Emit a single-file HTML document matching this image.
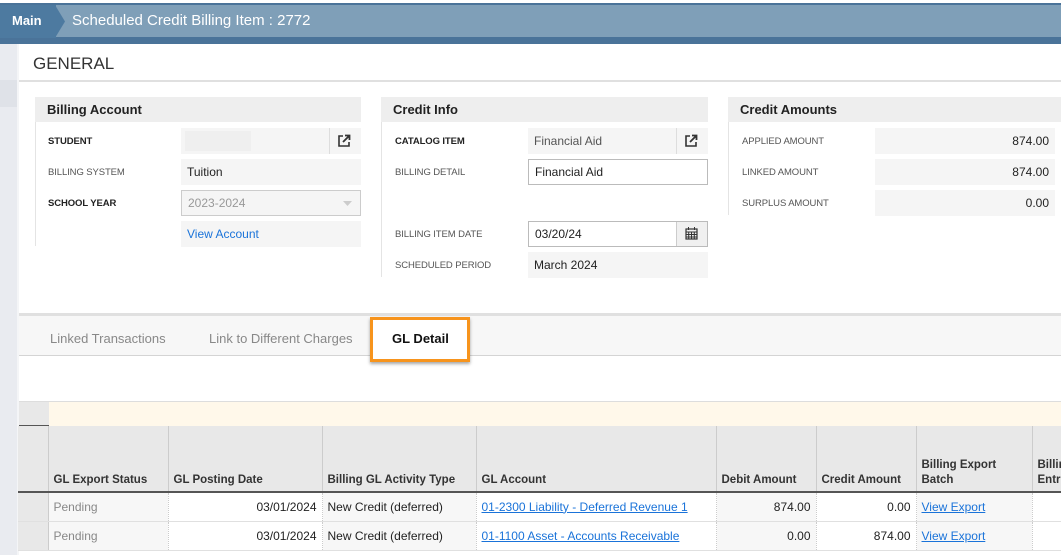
<!DOCTYPE html>
<html><head><meta charset="utf-8"><style>
*{box-sizing:border-box;margin:0;padding:0}
body{width:1061px;height:555px;overflow:hidden;background:#fff;font-family:"Liberation Sans",sans-serif;position:relative;color:#222}
.a{position:absolute}
.lbl{position:absolute;font-size:9.5px;color:#555;letter-spacing:-0.1px}
.lbl.b{font-weight:bold;color:#222}
.val{position:absolute;background:#f5f5f5;font-size:12px;padding-left:6px;line-height:26px;height:26px}
.sec{position:absolute;background:#eee;height:25px;font-size:13px;font-weight:bold;padding-left:12px;line-height:25px}
.vl{position:absolute;width:1px;background:#e4e4e4}
table{position:absolute;left:18px;top:426px;border-collapse:collapse;font-size:12px;table-layout:fixed;width:1060px}
td{height:29px;border-bottom:1px solid #e0e0e0;border-right:1px dotted #ccc;padding:0 5px;white-space:nowrap;overflow:hidden}
th{height:66px;background:#e8e8e8;border-right:1px solid #ccc;border-bottom:2px solid #555;text-align:left;vertical-align:bottom;padding:0 5px 3px;font-size:11.5px;font-weight:bold;color:#333;line-height:15px;overflow:hidden;white-space:nowrap}
a{color:#1a73d9;text-decoration:underline}
.r{text-align:right}
</style></head><body>
<div class="a" style="left:0;top:3px;width:1061px;height:2px;background:#4a7399"></div>
<div class="a" style="left:0;top:5px;width:1061px;height:33px;background:#7f9fb8"></div>
<div class="a" style="left:0;top:37px;width:1061px;height:7px;background:#4a7399"></div>
<div class="a" style="left:0;top:5px;width:56px;height:33px;background:#4d7aa0"></div>
<svg class="a" style="left:55px;top:5px" width="12" height="33"><polygon points="0,0 10,16.5 0,33" fill="#4d7aa0"/></svg>
<div class="a" style="left:12px;top:13px;color:#fff;font-weight:bold;font-size:13px">Main</div>
<div class="a" style="left:72px;top:12px;color:#fff;font-size:15px">Scheduled Credit Billing Item : 2772</div>
<div class="a" style="left:0;top:44px;width:17px;height:511px;background:#e9ebf0"></div>
<div class="a" style="left:0;top:80px;width:17px;height:27px;background:#dfe2e8"></div>
<div class="a" style="left:17px;top:44px;width:2px;height:511px;background:#f4f5f7"></div>
<div class="a" style="left:33px;top:54px;font-size:17px;color:#333">GENERAL</div>
<div class="a" style="left:19px;top:80px;width:1042px;height:2px;background:#e0e0e0"></div>
<div class="sec" style="left:35px;top:97px;width:326px">Billing Account</div>
<div class="vl" style="left:35px;top:122px;height:124px"></div>
<div class="lbl b" style="left:48px;top:136px">STUDENT</div>
<div class="val" style="left:181px;top:128px;width:180px;padding:0"><div class="a" style="left:4px;top:3px;width:66px;height:20px;background:#efefef"></div><div class="a" style="left:148px;top:0;width:1px;height:26px;background:#ddd"></div></div>
<svg class="a" style="left:337px;top:134px" width="14" height="14" viewBox="0 0 14 14"><path d="M6 2H2v10h10V8" fill="none" stroke="#333" stroke-width="1.6"/><path d="M6 8L12 2M8 1.5h4.5V6" fill="none" stroke="#333" stroke-width="1.8"/></svg>
<div class="lbl" style="left:48px;top:167px">BILLING SYSTEM</div>
<div class="val" style="left:181px;top:159px;width:180px">Tuition</div>
<div class="lbl b" style="left:48px;top:198px">SCHOOL YEAR</div>
<div class="val" style="left:181px;top:190px;width:180px;border:1px solid #ccc;color:#999;line-height:24px">2023-2024</div>
<svg class="a" style="left:343px;top:201px" width="9" height="5"><polygon points="0,0 9,0 4.5,5" fill="#ccc"/></svg>
<div class="val" style="left:181px;top:221px;width:180px;color:#1a73d9">View Account</div>
<div class="sec" style="left:381px;top:97px;width:327px">Credit Info</div>
<div class="vl" style="left:381px;top:122px;height:155px"></div>
<div class="lbl b" style="left:395px;top:136px">CATALOG ITEM</div>
<div class="val" style="left:528px;top:128px;width:180px;color:#555">Financial Aid</div>
<div class="a" style="left:676px;top:128px;width:1px;height:26px;background:#ddd"></div>
<svg class="a" style="left:684px;top:134px" width="14" height="14" viewBox="0 0 14 14"><path d="M6 2H2v10h10V8" fill="none" stroke="#333" stroke-width="1.6"/><path d="M6 8L12 2M8 1.5h4.5V6" fill="none" stroke="#333" stroke-width="1.8"/></svg>
<div class="lbl" style="left:395px;top:167px">BILLING DETAIL</div>
<div class="val" style="left:528px;top:159px;width:180px;background:#fff;border:1px solid #bbb;line-height:24px">Financial Aid</div>
<div class="lbl" style="left:395px;top:229px">BILLING ITEM DATE</div>
<div class="val" style="left:528px;top:221px;width:180px;background:#fff;border:1px solid #bbb;line-height:24px">03/20/24</div>
<div class="a" style="left:676px;top:222px;width:31px;height:24px;background:#f0f0f0;border-left:1px solid #ccc"></div>
<svg class="a" style="left:685px;top:227px" width="13" height="13" viewBox="0 0 13 13"><rect x="1" y="2" width="11" height="10" fill="none" stroke="#333" stroke-width="1.2"/><path d="M1 5h11M1 7.5h11M1 10h11M3.7 5v7M6.5 5v7M9.3 5v7M3.5 0v3M9.5 0v3" stroke="#333" stroke-width="1"/></svg>
<div class="lbl" style="left:395px;top:260px">SCHEDULED PERIOD</div>
<div class="val" style="left:528px;top:252px;width:180px">March 2024</div>
<div class="sec" style="left:728px;top:97px;width:333px">Credit Amounts</div>
<div class="vl" style="left:728px;top:122px;height:93px"></div>
<div class="lbl" style="left:742px;top:136px">APPLIED AMOUNT</div>
<div class="val r" style="left:875px;top:128px;width:180px;padding-right:6px">874.00</div>
<div class="lbl" style="left:742px;top:167px">LINKED AMOUNT</div>
<div class="val r" style="left:875px;top:159px;width:180px;padding-right:6px">874.00</div>
<div class="lbl" style="left:742px;top:198px">SURPLUS AMOUNT</div>
<div class="val r" style="left:875px;top:190px;width:180px;padding-right:6px">0.00</div>
<div class="a" style="left:19px;top:313px;width:1042px;height:3px;background:#e0e0e0"></div>
<div class="a" style="left:19px;top:316px;width:1042px;height:40px;background:#f7f7f7;border-bottom:1px solid #d4d4d4"></div>
<div class="a" style="left:50px;top:331px;font-size:13px;color:#888">Linked Transactions</div>
<div class="a" style="left:209px;top:331px;font-size:13px;color:#888">Link to Different Charges</div>
<div class="a" style="left:370px;top:317px;width:100px;height:45px;border:3px solid #f7941d;background:#fff;box-shadow:0 2px 3px rgba(0,0,0,.35)"></div>
<div class="a" style="left:392px;top:331px;font-size:13px;font-weight:bold;color:#111">GL Detail</div>
<div class="a" style="left:19px;top:401px;width:1042px;height:1px;background:#ddd"></div>
<div class="a" style="left:19px;top:402px;width:30px;height:24px;background:#e8e8e8"></div>
<div class="a" style="left:49px;top:402px;width:1012px;height:24px;background:#fff8ea"></div>
<div class="a" style="left:19px;top:425px;width:30px;height:1px;background:#555"></div>
<table>
<colgroup><col style="width:30px"><col style="width:120px"><col style="width:154px"><col style="width:154px"><col style="width:240px"><col style="width:100px"><col style="width:100px"><col style="width:116px"><col style="width:46px"></colgroup>
<tr><th></th><th>GL Export Status</th><th>GL Posting Date</th><th>Billing GL Activity Type</th><th>GL Account</th><th>Debit Amount</th><th>Credit Amount</th><th>Billing Export<br>Batch</th><th>Billin<br>Entr</th></tr>
<tr><td style="background:#e8e8e8;border-right:1px solid #ccc"></td><td style="background:#f7f7f7;color:#888">Pending</td><td class="r">03/01/2024</td><td style="background:#f7f7f7">New Credit (deferred)</td><td><a>01-2300 Liability - Deferred Revenue 1</a></td><td class="r" style="background:#f7f7f7">874.00</td><td class="r">0.00</td><td style="background:#f7f7f7"><a>View Export</a></td><td></td></tr>
<tr><td style="background:#e8e8e8;border-right:1px solid #ccc"></td><td style="background:#f7f7f7;color:#888">Pending</td><td class="r">03/01/2024</td><td style="background:#f7f7f7">New Credit (deferred)</td><td><a>01-1100 Asset - Accounts Receivable</a></td><td class="r" style="background:#f7f7f7">0.00</td><td class="r">874.00</td><td style="background:#f7f7f7"><a>View Export</a></td><td></td></tr>
</table>
</body></html>
